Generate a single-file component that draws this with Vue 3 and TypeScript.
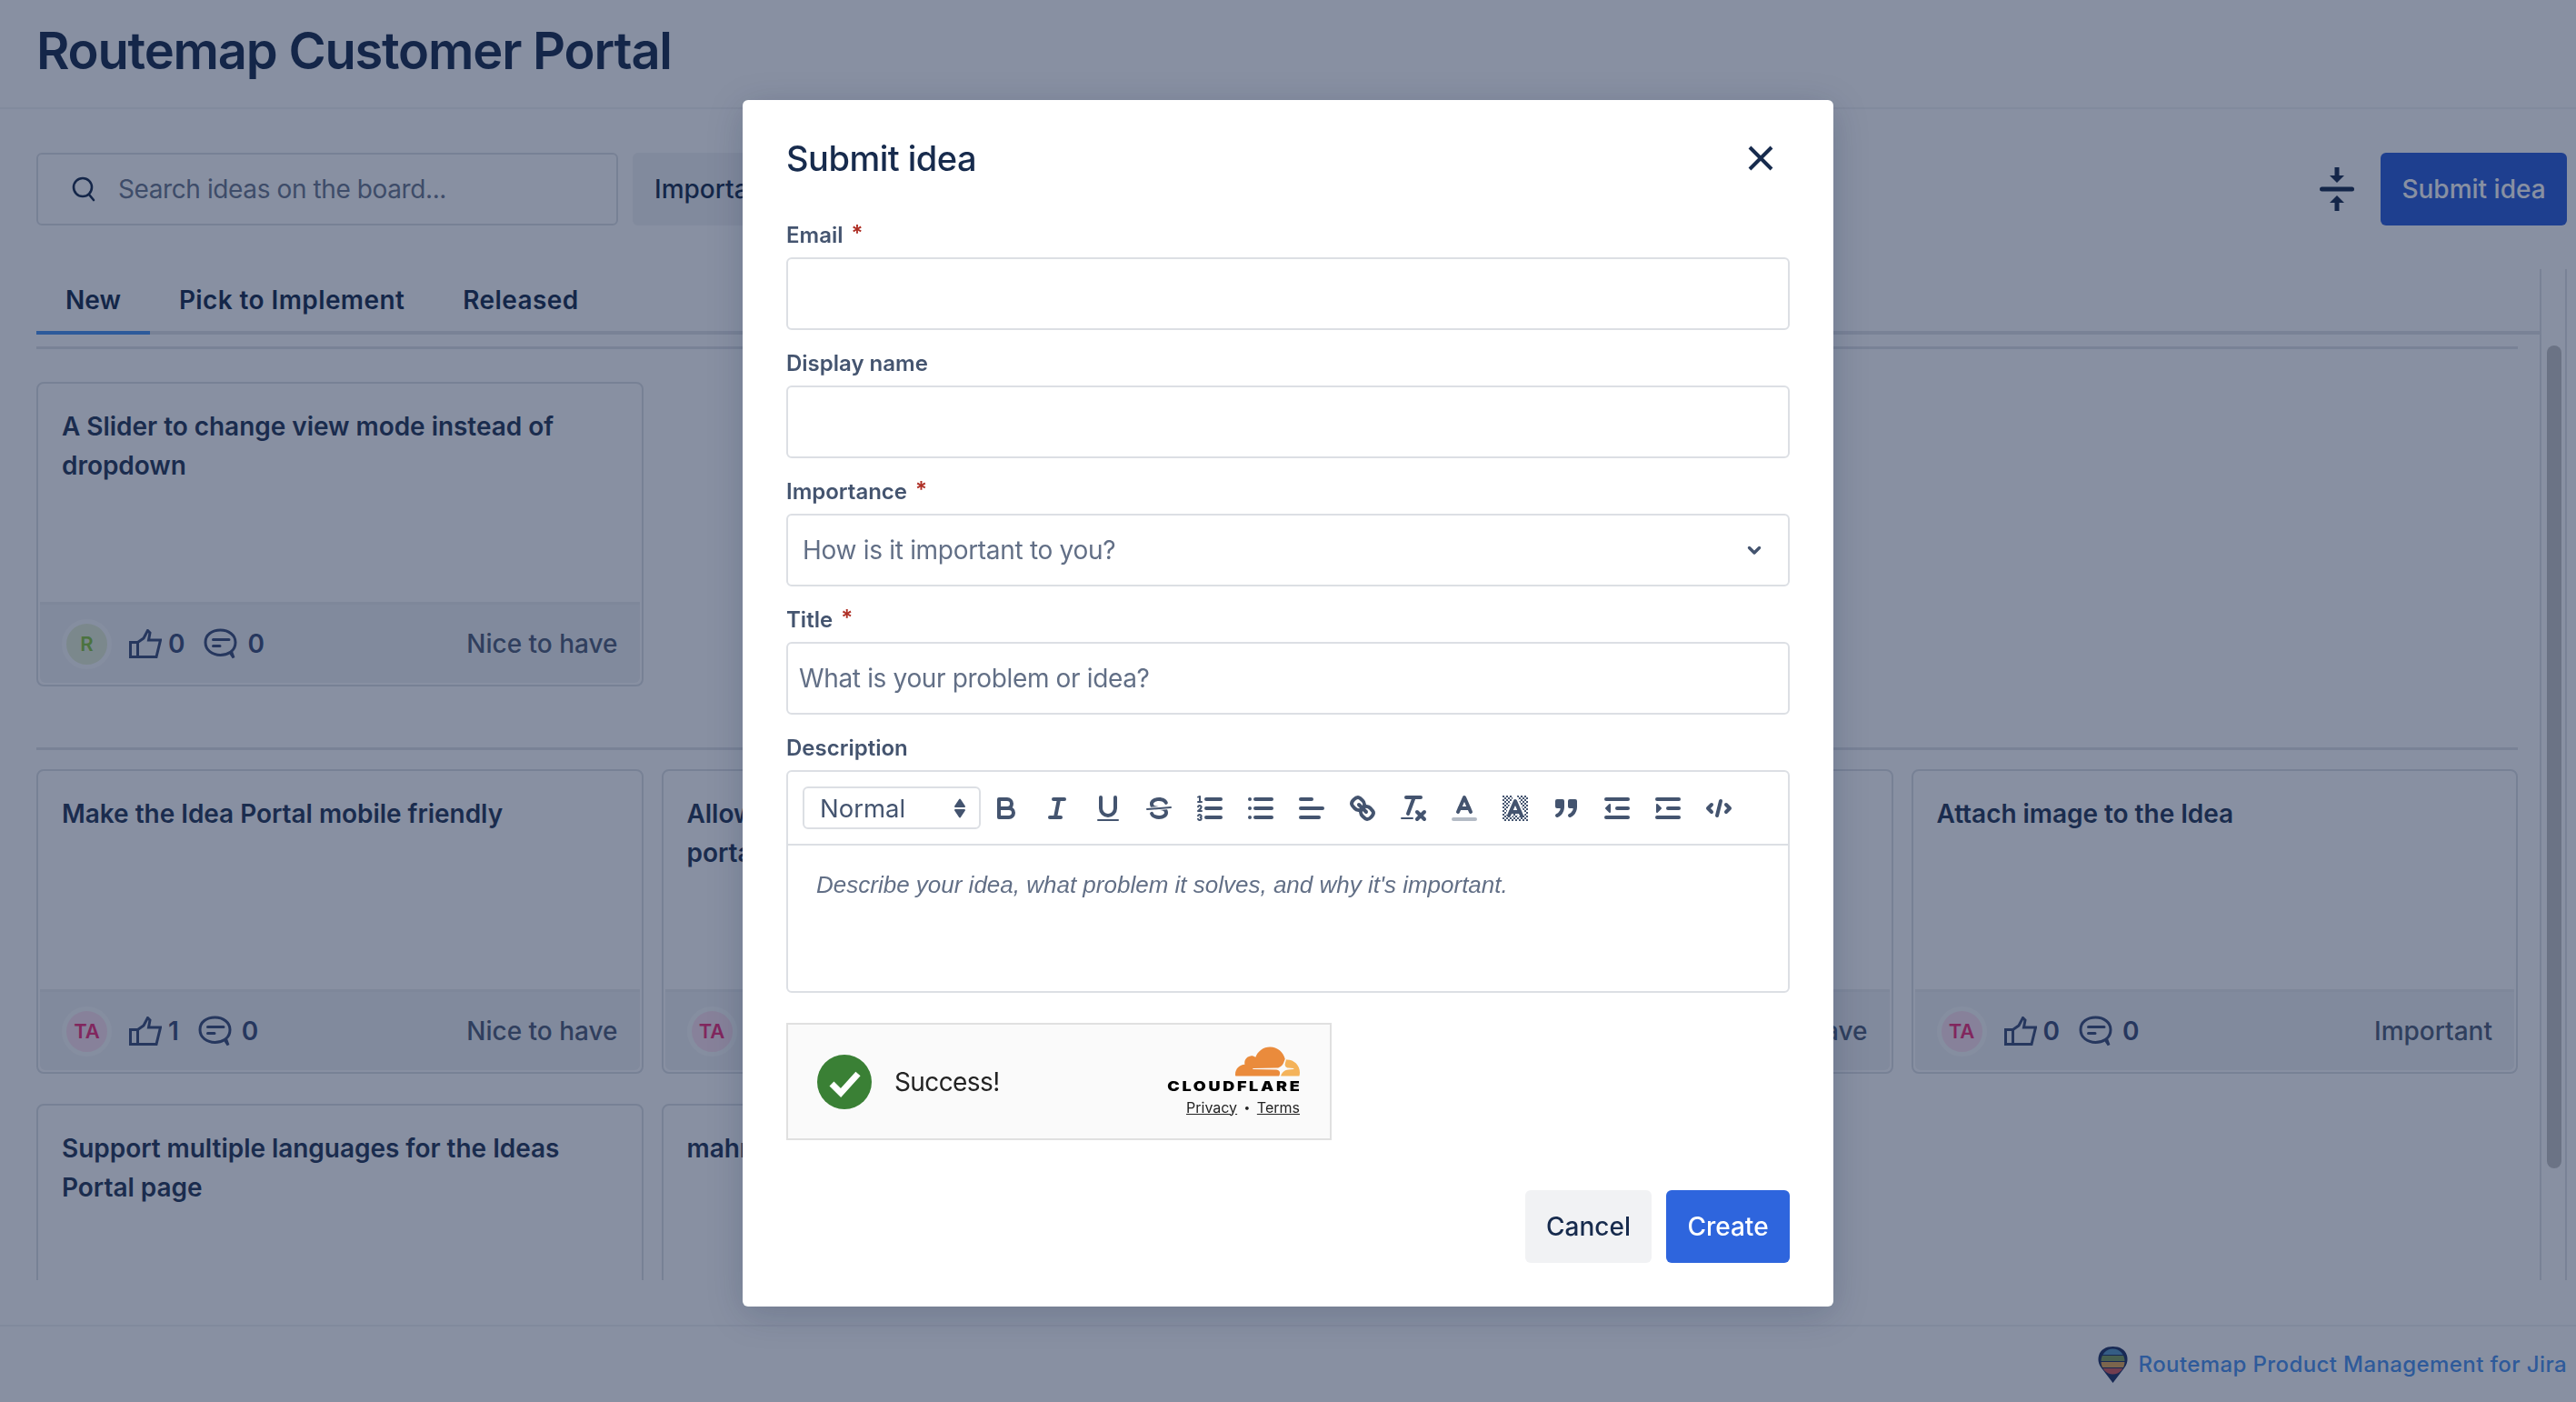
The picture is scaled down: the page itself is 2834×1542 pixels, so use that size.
<template>
  <div class="page">
    <header class="topbar">
      <h1>Routemap Customer Portal</h1>
    </header>

    <div class="controls">
      <div class="search">
        <svg class="search-icon" viewBox="0 0 28 28" width="28" height="28">
          <circle cx="13" cy="12" r="10" />
          <path d="M20 20l5 6" />
        </svg>
        <span>Search ideas on the board...</span>
      </div>
      <button class="filter">Importance</button>
      <div class="spacer"></div>
      <svg class="compress" viewBox="0 0 38 48" width="38" height="48">
        <path d="M19 0v9" class="shaft" />
        <path d="M11 9h16l-8 8z" class="head" />
        <rect x="0" y="21.5" width="38" height="5" rx="2.5" class="head" />
        <path d="M19 48v-9" class="shaft" />
        <path d="M11 39h16l-8-8z" class="head" />
      </svg>
      <button class="submit">Submit idea</button>
    </div>

    <div class="board">
      <div class="board-scroll">
        <nav class="tabs">
          <a v-for="(tab, index) in tabs" :key="tab" :class="{ active: index === 0 }">{{ tab }}</a>
        </nav>
        <section class="group first">
          <div class="grid">
            <IdeaCard v-for="card in firstGroup" :key="card.id" :card="card" />
          </div>
        </section>
        <section class="group">
          <div class="grid">
            <IdeaCard v-for="card in secondGroup" :key="card.id" :card="card" />
          </div>
        </section>
      </div>
      <div class="scrollbar"><div class="thumb"></div></div>
    </div>

    <footer class="footer">
      <svg viewBox="0 0 33 40" width="33" height="40">
        <path d="M16.5 40 L5 25 C0 19 0 14 1 10 C3 3 9 0 16.5 0 C24 0 30 3 32 10 C33 14 33 19 28 25 Z" fill="#12265a" />
        <clipPath id="pin-clip"><ellipse cx="16.5" cy="16.5" rx="13" ry="14" /></clipPath>
        <g clip-path="url(#pin-clip)">
          <rect x="0" y="0" width="33" height="9" fill="#4f93c0" />
          <rect x="0" y="10" width="33" height="6" fill="#75974f" />
          <rect x="0" y="17" width="33" height="6" fill="#e4a54b" />
          <rect x="0" y="24" width="33" height="8" fill="#cf4f50" />
        </g>
      </svg>
      <a>Routemap Product Management for Jira</a>
    </footer>

    <div class="overlay">
      <div class="modal">
        <div class="modal-head">
          <h2>Submit idea</h2>
          <svg class="close" viewBox="0 0 28 28" width="28" height="28">
            <path d="M2 2l24 24M26 2L2 26" />
          </svg>
        </div>

        <div class="form">
          <div class="field">
            <label>Email <em>*</em></label>
            <input type="text" />
          </div>
          <div class="field">
            <label>Display name</label>
            <input type="text" />
          </div>
          <div class="field">
            <label>Importance <em>*</em></label>
            <div class="select">
              <span>How is it important to you?</span>
              <svg viewBox="0 0 16 11" width="16" height="11"><path d="M2.500 2.500l5.500 5.500 5.500-5.500" /></svg>
            </div>
          </div>
          <div class="field">
            <label>Title <em>*</em></label>
            <input type="text" class="tight" placeholder="What is your problem or idea?" />
          </div>
          <div class="field">
            <label>Description</label>
            <div class="editor">
              <div class="toolbar">
                <div class="heading">
                  <span>Normal</span>
                  <svg viewBox="0 0 14 22" width="14" height="22">
                    <path d="M7 1.500L12 9H2zM7 20.500L12 13H2z" />
                  </svg>
                </div>
                <button>
                  <svg viewBox="0 0 18 18"><path class="s" d="M5,4H9.5A2.5,2.5,0,0,1,12,6.5v0A2.5,2.5,0,0,1,9.5,9H5A0,0,0,0,1,5,9V4A0,0,0,0,1,5,4Z" /><path class="s" d="M5,9h5.5A2.5,2.5,0,0,1,13,11.5v0A2.5,2.5,0,0,1,10.5,14H5a0,0,0,0,1,0,0V9A0,0,0,0,1,5,9Z" /></svg>
                </button>
                <button>
                  <svg viewBox="0 0 18 18"><line class="s" x1="7" x2="13" y1="4" y2="4" /><line class="s" x1="5" x2="11" y1="14" y2="14" /><line class="s" x1="8" x2="10" y1="14" y2="4" /></svg>
                </button>
                <button>
                  <svg viewBox="0 0 18 18"><path class="s" d="M5,3V9a4.012,4.012,0,0,0,4,4H9a4.012,4.012,0,0,0,4-4V3" /><rect class="f" height="1" rx=".5" ry=".5" width="12" x="3" y="15" /></svg>
                </button>
                <button>
                  <svg viewBox="0 0 18 18"><line class="s thin" x1="15.5" x2="2.5" y1="8.5" y2="9.5" /><path class="f" d="M9.007,8C6.542,7.791,6,7.519,6,6.5,6,5.792,7.283,5,9,5c1.571,0,2.765.679,2.969,1.309a1,1,0,0,0,1.9-.617C13.356,4.106,11.354,3,9,3,6.2,3,4,4.538,4,6.5a3.2,3.2,0,0,0,.5,1.843Z" /><path class="f" d="M8.984,10C11.457,10.208,12,10.479,12,11.5c0,.708-1.283,1.5-3,1.5-1.571,0-2.765-.679-2.969-1.309a1,1,0,1,0-1.9.617C4.644,13.894,6.646,15,9,15c2.8,0,5-1.538,5-3.5a3.2,3.2,0,0,0-.5-1.843Z" /></svg>
                </button>
                <button>
                  <svg viewBox="0 0 18 18"><line class="s" x1="7" x2="15" y1="4" y2="4" /><line class="s" x1="7" x2="15" y1="9" y2="9" /><line class="s" x1="7" x2="15" y1="14" y2="14" /><line class="s thin" x1="2.5" x2="4.5" y1="5.5" y2="5.5" /><path class="f" d="M3.5,6A0.5,0.5,0,0,1,3,5.5V3.085l-0.276.138A0.5,0.5,0,0,1,2.053,3c-0.124-.247-0.023-0.324.224-0.447l1-.5A0.5,0.5,0,0,1,4,2.5v3A0.5,0.5,0,0,1,3.5,6Z" /><path class="s thin" d="M4.5,10.5h-2c0-.234,1.85-1.076,1.85-2.234A0.959,0.959,0,0,0,2.5,8.156" /><path class="s thin" d="M2.5,14.846a0.959,0.959,0,0,0,1.85-.109A0.7,0.7,0,0,0,3.75,14a0.688,0.688,0,0,0,.6-0.736,0.959,0.959,0,0,0-1.85-.109" /></svg>
                </button>
                <button>
                  <svg viewBox="0 0 18 18"><line class="s" x1="6" x2="15" y1="4" y2="4" /><line class="s" x1="6" x2="15" y1="9" y2="9" /><line class="s" x1="6" x2="15" y1="14" y2="14" /><line class="s" x1="3" x2="3" y1="4" y2="4" /><line class="s" x1="3" x2="3" y1="9" y2="9" /><line class="s" x1="3" x2="3" y1="14" y2="14" /></svg>
                </button>
                <button>
                  <svg viewBox="0 0 18 18"><line class="s" x1="3" x2="15" y1="9" y2="9" /><line class="s" x1="3" x2="13" y1="14" y2="14" /><line class="s" x1="3" x2="9" y1="4" y2="4" /></svg>
                </button>
                <button>
                  <svg viewBox="0 0 18 18"><line class="s" x1="7" x2="11" y1="7" y2="11" /><path class="s" d="M8.9,4.577a3.476,3.476,0,0,1,.36,4.679A3.476,3.476,0,0,1,4.577,8.9C3.185,7.5,2.035,6.4,4.217,4.217S7.5,3.185,8.9,4.577Z" /><path class="s" d="M13.423,9.1a3.476,3.476,0,0,0-4.679-.36,3.476,3.476,0,0,0,.36,4.679c1.392,1.392,2.5,2.542,4.679.36S14.815,10.5,13.423,9.1Z" /></svg>
                </button>
                <button>
                  <svg viewBox="0 0 18 18"><line class="s" x1="5" x2="13" y1="3" y2="3" /><line class="s" x1="6" x2="9.35" y1="12" y2="3" /><line class="s" x1="11" x2="15" y1="11" y2="15" /><line class="s" x1="15" x2="11" y1="11" y2="15" /><rect class="f" height="1" rx=".5" ry=".5" width="7" x="2" y="14" /></svg>
                </button>
                <button>
                  <svg viewBox="0 0 18 18"><line class="s faint" x1="3" x2="15" y1="15" y2="15" /><polyline class="s" points="5.5 11 9 3 12.5 11" /><line class="s" x1="11.63" x2="6.38" y1="9" y2="9" /></svg>
                </button>
                <button>
                  <svg viewBox="0 0 18 18">
                    <pattern id="checker" width="2" height="2" patternUnits="userSpaceOnUse">
                      <rect class="f" width="1" height="1" />
                      <rect class="f" x="1" y="1" width="1" height="1" />
                    </pattern>
                    <rect x="2" y="2" width="14" height="14" fill="url(#checker)" />
                    <polyline class="halo" points="5.5 13 9 5 12.5 13" />
                    <polyline class="s" points="5.5 13 9 5 12.5 13" />
                    <line class="s" x1="11.63" x2="6.38" y1="11" y2="11" />
                  </svg>
                </button>
                <button>
                  <svg viewBox="0 0 18 18"><rect class="f s" height="3" width="3" x="4" y="5" /><rect class="f s" height="3" width="3" x="11" y="5" /><path class="s" d="M7,8c0,4.031-3,5-3,5" /><path class="s" d="M14,8c0,4.031-3,5-3,5" /></svg>
                </button>
                <button>
                  <svg viewBox="0 0 18 18"><line class="s" x1="3" x2="15" y1="14" y2="14" /><line class="s" x1="3" x2="15" y1="4" y2="4" /><line class="s" x1="9" x2="15" y1="9" y2="9" /><polygon class="f s thin" points="5 7 5 11 3 9" /></svg>
                </button>
                <button>
                  <svg viewBox="0 0 18 18"><line class="s" x1="3" x2="15" y1="14" y2="14" /><line class="s" x1="3" x2="15" y1="4" y2="4" /><line class="s" x1="9" x2="15" y1="9" y2="9" /><polygon class="f s thin" points="3 7 3 11 5 9" /></svg>
                </button>
                <button>
                  <svg viewBox="0 0 18 18"><polyline class="s" points="5 7 3 9 5 11" /><polyline class="s" points="13 7 15 9 13 11" /><line class="s" x1="10" x2="8" y1="5" y2="13" /></svg>
                </button>
              </div>
              <div class="editor-body">Describe your idea, what problem it solves, and why it's important.</div>
            </div>
          </div>
        </div>

        <div class="turnstile">
          <svg class="check" viewBox="0 0 60 60" width="60" height="60">
            <circle cx="30" cy="30" r="30" />
            <path d="M16 32l10 10 19-21" />
          </svg>
          <span class="success">Success!</span>
          <div class="cf">
            <svg viewBox="0 6.5 24 11" width="71" height="33">
              <path fill="#ea8b3c" d="M16.5088 16.8447c.1475-.5068.0908-.9707-.1553-1.3154-.2246-.3164-.6045-.499-1.0615-.5205l-8.6592-.1123a.1559.1559 0 0 1-.1333-.0713c-.0283-.042-.0351-.0986-.021-.1553.0278-.084.1123-.1484.2036-.1562l8.7359-.1123c1.0351-.0489 2.1601-.8868 2.5537-1.9136l.499-1.3013c.0215-.0561.0293-.1128.0147-.168-.5625-2.5463-2.835-4.4453-5.5499-4.4453-2.5039 0-4.6284 1.6177-5.3876 3.8614-.4927-.3658-1.1187-.5625-1.794-.499-1.2026.119-2.1665 1.083-2.2861 2.2856-.0283.31-.0069.6128.0635.894C1.5683 13.171 0 14.7754 0 16.752c0 .1748.0142.3515.0352.5273.0141.083.0844.1475.1689.1475h15.9814c.0909 0 .1758-.0645.2032-.1553l.12-.4268z" />
              <path fill="#f4b35a" d="M19.2656 11.2813c-.0771 0-.1611 0-.2383.0112-.0566 0-.1054.0415-.127.0976l-.3378 1.1744c-.1475.5068-.0918.9707.1543 1.3164.2256.3164.6055.498 1.0625.5195l1.8437.1133c.0557 0 .1055.0263.1329.0703.0283.043.0351.1074.0214.1562-.0283.084-.1132.1485-.204.1553l-1.921.1123c-1.041.0488-2.1582.8867-2.5527 1.914l-.1406.3585c-.0283.0713.0215.1416.0986.1416h6.5977c.0771 0 .1474-.0489.169-.126.1122-.4082.1757-.837.1757-1.2803 0-2.6025-2.125-4.727-4.7344-4.727" />
            </svg>
            <div class="cf-name">CLOUDFLARE</div>
            <div class="cf-links"><a>Privacy</a><i>•</i><a>Terms</a></div>
          </div>
        </div>

        <div class="actions">
          <button class="cancel">Cancel</button>
          <button class="create">Create</button>
        </div>
      </div>
    </div>
  </div>
</template>

<script setup lang="ts">
import { defineComponent, h } from 'vue'

interface Card {
  id: number
  title: string
  initials: string
  tone: 'green' | 'pink'
  votes: number
  comments: number
  importance: string
  clipped?: boolean
}

const tabs = ['New', 'Pick to Implement', 'Released']

const firstGroup: Card[] = [
  { id: 1, title: 'A Slider to change view mode instead of dropdown', initials: 'R', tone: 'green', votes: 0, comments: 0, importance: 'Nice to have' },
]

const secondGroup: Card[] = [
  { id: 2, title: 'Make the Idea Portal mobile friendly', initials: 'TA', tone: 'pink', votes: 1, comments: 0, importance: 'Nice to have' },
  { id: 3, title: 'Allow\nportal', initials: 'TA', tone: 'pink', votes: 0, comments: 0, importance: 'Nice to have' },
  { id: 4, title: '', initials: 'TA', tone: 'pink', votes: 0, comments: 0, importance: 'Nice to have' },
  { id: 5, title: 'Attach image to the Idea', initials: 'TA', tone: 'pink', votes: 0, comments: 0, importance: 'Important' },
  // the last row runs under the fold of the board, its footers never show
  { id: 6, title: 'Support multiple languages for the Ideas Portal page', initials: 'TA', tone: 'pink', votes: 0, comments: 0, importance: 'Nice to have', clipped: true },
  { id: 7, title: 'mahr', initials: 'TA', tone: 'pink', votes: 0, comments: 0, importance: 'Nice to have', clipped: true },
]

const IdeaCard = defineComponent({
  props: { card: { type: Object as () => Card, required: true } },
  setup(props) {
    return () =>
      h('article', { class: 'card' }, [
        h('div', { class: 'card-title' }, props.card.title),
        props.card.clipped
          ? null
          : h('div', { class: 'card-foot' }, [
              h('span', { class: ['avatar', props.card.tone] }, props.card.initials),
              h('svg', { class: 'thumb-icon', viewBox: '0 0 36 32', width: 36, height: 32 }, [
                h('path', { d: 'M1.5 14.5h8v16h-8z' }),
                h('path', { d: 'M9.5 14.5L16 10l4.5-8.5 2.5 2.500L21.500 12H34.500L30 30.500H9.500' }),
              ]),
              h('span', { class: 'count' }, String(props.card.votes)),
              h('svg', { class: 'comment-icon', viewBox: '0 0 38 34', width: 38, height: 34 }, [
                h('path', { d: 'M29 26.500C26 28.500 22.500 29.500 18.500 29.500 9.500 29.500 2 24 2 15.500S9.500 2 18.500 2 35 7.500 35 15.500C35 19.500 33.500 23 30.500 25.500L33 32.500Z' }),
                h('path', { class: 'bar', d: 'M10.500 12.500H28M10.500 19.500H18' }),
              ]),
              h('span', { class: 'count' }, String(props.card.comments)),
              h('span', { class: 'importance' }, props.card.importance),
            ]),
      ])
  },
})
</script>

<style>
html,
body {
  height: 1542px;
  margin: 0;
  overflow: hidden;
  background: #fff;
}

.card {
  display: flex;
  flex-direction: column;
  box-sizing: border-box;
  height: 335px;
  padding: 2px;
  border: 2px solid #dcdfe4;
  border-radius: 8px;
  background: #fff;
}

.card-title {
  flex: 1;
  padding: 24px 26px 0 24px;
  font-size: 28px;
  font-weight: 600;
  letter-spacing: -0.04px;
  line-height: 43px;
  color: #172b4d;
  white-space: pre-line;
}

.card-foot {
  display: flex;
  align-items: center;
  box-sizing: border-box;
  height: 89px;
  padding: 0 24px;
  background: #f1f2f4;
  border-top: 3px solid #e9ebee;
  border-radius: 0 0 6px 6px;
  font-size: 28px;
  color: #44546f;
}

.avatar {
  display: flex;
  align-items: center;
  justify-content: center;
  box-sizing: border-box;
  width: 55px;
  height: 55px;
  margin-right: 19px;
  border: 5px solid #f9fafb;
  border-radius: 50%;
  font-size: 22px;
  font-weight: 600;
}

.avatar.green {
  background: #e4efd0;
  color: #7fc22e;
}

.avatar.pink {
  background: #fde0ee;
  color: #f0206f;
}

.thumb-icon,
.comment-icon {
  flex: none;
  fill: none;
  stroke: #2f4370;
  stroke-width: 3;
}

.comment-icon .bar {
  stroke-linecap: round;
}

.count {
  margin-left: 7px;
  margin-right: 21px;
  font-weight: 600;
  color: #2f4370;
}

.count + .comment-icon + .count {
  margin-left: 10px;
}

.importance {
  margin-left: auto;
  font-weight: 500;
}
</style>

<style scoped>
.page {
  position: relative;
  display: flex;
  flex-direction: column;
  height: 1542px;
  overflow: hidden;
  font-family: Inter, "Noto Sans", sans-serif;
  color: #172b4d;
}

.topbar {
  display: flex;
  align-items: center;
  box-sizing: border-box;
  height: 120px;
  padding: 0 40px 6px;
  border-bottom: 2px solid #f1f2f4;
}

h1 {
  margin: 0;
  font-size: 56px;
  font-weight: 600;
  letter-spacing: -1.2px;
  color: #091e42;
}

.controls {
  display: flex;
  align-items: center;
  height: 80px;
  margin-top: 48px;
  padding: 0 10px 0 40px;
}

.search {
  display: flex;
  align-items: center;
  box-sizing: border-box;
  width: 640px;
  height: 80px;
  padding-left: 36px;
  border: 2px solid #dcdfe4;
  border-radius: 6px;
  font-size: 28px;
  letter-spacing: -0.4px;
  color: #626f86;
}

.search-icon {
  margin-right: 24px;
  fill: none;
  stroke: #091e42;
  stroke-width: 2.6;
  stroke-linecap: round;
}

.filter {
  height: 80px;
  margin-left: 16px;
  padding: 0 24px;
  border: 0;
  border-radius: 6px;
  background: #f1f2f4;
  font: 500 28px Inter, sans-serif;
  color: #091e42;
}

.spacer {
  flex: 1;
}

.compress {
  margin-right: 29px;
}

.compress .shaft {
  stroke: #091e42;
  stroke-width: 5;
  fill: none;
}

.compress .head {
  fill: #091e42;
}

.submit {
  width: 205px;
  height: 80px;
  border: 0;
  border-radius: 6px;
  background: #1e53d6;
  font: 500 28px Inter, sans-serif;
  color: #fff;
}

.board {
  display: flex;
  height: 1112px;
  margin: 48px 10px 0 40px;
}

.board-scroll {
  flex: 1;
  min-width: 0;
  overflow: hidden;
}

.tabs {
  display: flex;
  height: 68px;
  border-bottom: 4px solid #dfe1e6;
}

.tabs a {
  display: flex;
  align-items: center;
  height: 72px;
  padding: 0 32px;
  box-sizing: border-box;
  font-size: 28px;
  font-weight: 600;
  letter-spacing: 0.4px;
  color: #091e42;
  border-bottom: 4px solid transparent;
}

.tabs a:first-child {
  letter-spacing: 0;
}

.tabs a.active {
  border-bottom-color: #3f8cee;
}

.group {
  margin-right: 24px;
}

.group.first {
  margin-top: 13px;
  padding-top: 36px;
  padding-bottom: 67px;
  border-top: 3px solid #dfe1e6;
}

.group:not(.first) {
  padding-top: 21px;
  border-top: 3px solid #dfe1e6;
}

.grid {
  display: grid;
  grid-template-columns: repeat(4, 1fr);
  gap: 33px 20px;
}

.scrollbar {
  box-sizing: border-box;
  flex: none;
  width: 30px;
  padding: 84px 6px 0;
  border-left: 2px solid #dfe1e6;
  border-right: 2px solid #dfe1e6;
}

.thumb {
  width: 16px;
  height: 905px;
  border-radius: 8px;
  background: #c1c1c1;
}

.footer {
  display: flex;
  align-items: center;
  justify-content: flex-end;
  gap: 12px;
  box-sizing: border-box;
  height: 85px;
  margin-top: 49px;
  padding: 0 10px 0 0;
  border-top: 2px solid #f1f2f4;
}

.footer a {
  font-size: 24px;
  font-weight: 500;
  letter-spacing: 0.4px;
  color: #408cee;
}

.overlay {
  position: fixed;
  inset: 0;
  display: flex;
  justify-content: center;
  align-items: flex-start;
  padding-top: 110px;
  background: rgba(30, 45, 80, 0.53);
}

.modal {
  box-sizing: border-box;
  width: 1200px;
  height: 1327px;
  padding: 0 48px;
  border-radius: 6px;
  background: #fff;
  box-shadow: 0 8px 40px rgba(9, 30, 66, 0.2);
}

.modal-head {
  display: flex;
  align-items: center;
  justify-content: space-between;
  height: 130px;
  padding-bottom: 2px;
  box-sizing: border-box;
}

h2 {
  margin: 0;
  font-size: 38px;
  font-weight: 500;
  letter-spacing: -0.5px;
  color: #172b4d;
}

.close {
  margin-right: 18px;
  fill: none;
  stroke: #172b4d;
  stroke-width: 4;
}

.form {
  display: flex;
  flex-direction: column;
  gap: 21px;
  margin-top: 3px;
}

.field {
  display: flex;
  flex-direction: column;
  gap: 8px;
}

label {
  height: 32px;
  font-size: 24px;
  font-weight: 600;
  line-height: 32px;
  color: #44546f;
}

label em {
  margin-left: 3px;
  font-style: normal;
  color: #ae2e24;
  position: relative;
  top: -2px;
}

input,
.select {
  box-sizing: border-box;
  width: 100%;
  height: 80px;
  border: 2px solid #dcdfe4;
  border-radius: 6px;
  background: #fff;
  font: 400 28px Inter, sans-serif;
  letter-spacing: -0.3px;
  color: #172b4d;
  outline: none;
}

input.tight {
  padding: 0 12px;
  letter-spacing: -0.35px;
}

input::placeholder {
  color: #626f86;
  opacity: 1;
}

.select {
  display: flex;
  align-items: center;
  justify-content: space-between;
  padding: 0 29px 0 16px;
  color: #626f86;
}

.select svg {
  fill: none;
  stroke: #44546f;
  stroke-width: 3.4;
  stroke-linecap: round;
  stroke-linejoin: round;
}

.editor {
  box-sizing: border-box;
  height: 245px;
  border: 2px solid #dcdfe4;
  border-radius: 6px;
}

.toolbar {
  display: flex;
  align-items: center;
  box-sizing: border-box;
  height: 81px;
  padding: 0 0 0 16px;
  border-bottom: 2px solid #dcdfe4;
}

.heading {
  display: flex;
  align-items: center;
  justify-content: space-between;
  box-sizing: border-box;
  width: 196px;
  height: 47px;
  padding: 0 14px 0 17px;
  border: 2px solid #dcdfe4;
  border-radius: 6px;
  font-size: 27.5px;
  color: #44546f;
}

.heading svg {
  fill: #44546f;
  stroke: #44546f;
  stroke-width: 2;
  stroke-linejoin: round;
}

.toolbar button {
  display: flex;
  align-items: center;
  justify-content: center;
  flex: none;
  width: 56px;
  height: 48px;
  padding: 0;
  border: 0;
  background: none;
}

.toolbar button svg {
  width: 36px;
  height: 36px;
}

.s {
  fill: none;
  stroke: #44546f;
  stroke-width: 2;
  stroke-linecap: round;
  stroke-linejoin: round;
}

.thin {
  stroke-width: 1;
}

.faint {
  stroke-opacity: 0.4;
}

.f {
  fill: #44546f;
}

.halo {
  fill: none;
  stroke: #fff;
  stroke-width: 4;
}

.editor-body {
  padding: 24px 31px;
  font: italic 26px "Liberation Sans", Arial, sans-serif;
  line-height: 38px;
  color: #626f86;
}

.turnstile {
  display: flex;
  align-items: center;
  box-sizing: border-box;
  width: 600px;
  height: 129px;
  margin-top: 33px;
  padding: 0 33px 0 32px;
  border: 2px solid #e0e0e0;
  background: #fafafa;
}

.check {
  flex: none;
  margin-right: 25px;
}

.check circle {
  fill: #3a8035;
}

.check path {
  fill: none;
  stroke: #fff;
  stroke-width: 7;
}

.success {
  font-size: 28px;
  letter-spacing: -0.6px;
  color: #232323;
}

.cf {
  display: flex;
  flex-direction: column;
  align-items: flex-end;
  margin-left: auto;
}

.cf-name {
  margin-top: 3px;
  margin-right: -2px;
  font-size: 15px;
  font-weight: 900;
  line-height: 15px;
  letter-spacing: 2.25px;
  color: #000;
  transform: scaleX(1.2);
  transform-origin: right center;
}

.cf-links {
  display: flex;
  align-items: center;
  gap: 7.5px;
  margin-top: 5px;
  font-size: 16px;
  line-height: 22px;
  color: #232323;
}

.cf-links a {
  text-decoration: underline;
}

.cf-links i {
  font-style: normal;
  font-size: 12px;
}

.actions {
  display: flex;
  justify-content: flex-end;
  gap: 16px;
  margin-top: 55px;
}

.actions button {
  height: 80px;
  border: 0;
  border-radius: 6px;
  font: 500 28px Inter, sans-serif;
}

.cancel {
  width: 139px;
  background: #f1f2f4;
  color: #172b4d;
}

.create {
  width: 136px;
  background: #2e65dd;
  color: #fff;
}
</style>
